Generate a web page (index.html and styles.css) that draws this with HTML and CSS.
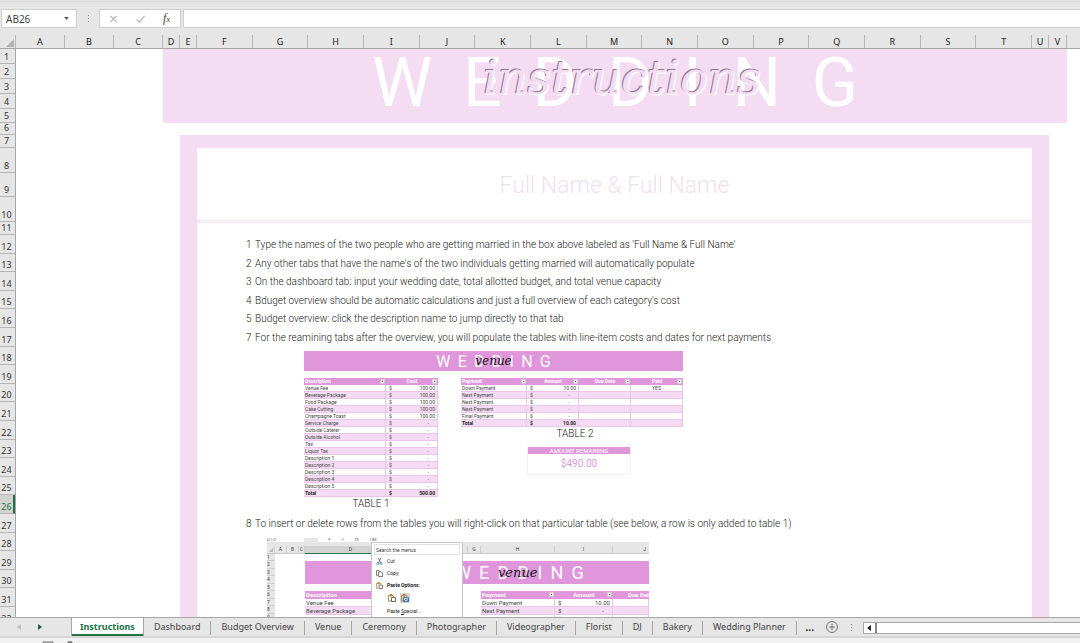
FILE: index.html
```html
<!DOCTYPE html>
<html lang="en">
<head>
    <meta charset="UTF-8">
    <meta name="viewport" content="width=device-width, initial-scale=1.0">
    <title>Wedding Planner - Instructions</title>
    <link rel="stylesheet" href="styles.css">
</head>
<body>

    <div class="formula-bar">
        <div class="name-box">
            <select class="name-select" aria-label="Name box">
                <option>AB26</option>
            </select>
            <svg class="caret" viewBox="0 0 6 4"><path d="M0 0h6L3 4z"/></svg>
        </div>
        <span class="dots"><i></i><i></i><i></i></span>
        <div class="formula-tools">
            <button class="tool" aria-label="Cancel">
                <svg viewBox="0 0 10 10"><path d="M1 1l8 8M9 1L1 9"/></svg>
            </button>
            <button class="tool" aria-label="Enter">
                <svg viewBox="0 0 10 10"><path d="M0 5.500L3.500 9L10 1"/></svg>
            </button>
            <button class="tool fx">f<sub>x</sub></button>
        </div>
        <input type="text" class="formula-input" aria-label="Formula bar">
    </div>

    <div class="columns">
        <span class="corner"><svg viewBox="0 0 8 8"><path d="M8 0v8H0z"/></svg></span>
        <span>A</span><span>B</span><span>C</span><span>D</span><span>E</span>
        <span>F</span><span>G</span><span>H</span><span>I</span><span>J</span>
        <span>K</span><span>L</span><span>M</span><span>N</span><span>O</span>
        <span>P</span><span>Q</span><span>R</span><span>S</span><span>T</span>
        <span>U</span><span>V</span>
    </div>

    <div class="sheet">
        <div class="rows">
            <span>1</span><span>2</span><span>3</span><span>4</span><span>5</span>
            <span>6</span><span>7</span><span>8</span><span>9</span><span>10</span>
            <span>11</span><span>12</span><span>13</span><span>14</span><span>15</span>
            <span>16</span><span>17</span><span>18</span><span>19</span><span>20</span>
            <span>21</span><span>22</span><span>23</span><span>24</span><span>25</span>
            <span class="current">26</span><span>27</span><span>28</span><span>29</span><span>30</span>
            <span>31</span><span>32</span>
        </div>

        <main class="cells">
            <header class="banner">
                <h1 class="banner-title">W &thinsp;E &thinsp;D &thinsp;D &thinsp;I &thinsp;N &thinsp;G</h1>
                <span class="banner-script">instructions</span>
            </header>

            <div class="frame">
                <div class="page">
                    <h2 class="names">Full Name &amp; Full Name</h2>

                    <ol class="steps">
                        <li value="1"><span class="num">1</span>Type the names of the two people who are getting married in the box above labeled as 'Full Name &amp; Full Name'</li>
                        <li value="2"><span class="num">2</span>Any other tabs that have the name's of the two individuals getting married will automatically populate</li>
                        <li value="3"><span class="num">3</span>On the dashboard tab: input your wedding date, total allotted budget, and total venue capacity</li>
                        <li value="4"><span class="num">4</span>Bduget overview should be automatic calculations and just a full overview of each category's cost</li>
                        <li value="5"><span class="num">5</span>Budget overview: click the description name to jump directly to that tab</li>
                        <li value="7"><span class="num">7</span>For the reamining tabs after the overview, you will populate the tables with line-item costs and dates for next payments</li>
                    </ol>

                    <section class="example">
                        <div class="venue-banner">
                            <span class="venue-title">W &thinsp;E &thinsp;D &thinsp;D &thinsp;I &thinsp;N &thinsp;G</span>
                            <span class="venue-script">venue</span>
                        </div>
                        <div class="tables">
                            <div class="table-one">
                                <table class="budget">
                                    <colgroup><col class="col-desc"><col></colgroup>
                                    <tr><th class="left">Description<button class="filter" aria-label="Filter description"></button></th><th>Cost<button class="filter" aria-label="Filter cost"></button></th></tr>
                                    <tr><td>Venue Fee</td><td class="money"><span>$</span>100.00</td></tr>
                                    <tr><td>Beverage Package</td><td class="money"><span>$</span>100.00</td></tr>
                                    <tr><td>Food Package</td><td class="money"><span>$</span>100.00</td></tr>
                                    <tr><td>Cake Cutting</td><td class="money"><span>$</span>100.00</td></tr>
                                    <tr><td>Champagne Toast</td><td class="money"><span>$</span>100.00</td></tr>
                                    <tr><td>Service Charge</td><td class="money none"><span>$</span>-</td></tr>
                                    <tr><td>Outside Caterer</td><td class="money none"><span>$</span>-</td></tr>
                                    <tr><td>Outside Alcohol</td><td class="money none"><span>$</span>-</td></tr>
                                    <tr><td>Tax</td><td class="money none"><span>$</span>-</td></tr>
                                    <tr><td>Liquor Tax</td><td class="money none"><span>$</span>-</td></tr>
                                    <tr><td>Description 1</td><td class="money none"><span>$</span>-</td></tr>
                                    <tr><td>Description 2</td><td class="money none"><span>$</span>-</td></tr>
                                    <tr><td>Description 3</td><td class="money none"><span>$</span>-</td></tr>
                                    <tr><td>Description 4</td><td class="money none"><span>$</span>-</td></tr>
                                    <tr><td>Description 5</td><td class="money none"><span>$</span>-</td></tr>
                                    <tr class="total"><td>Total</td><td class="money"><span>$</span>500.00</td></tr>
                                </table>
                                <p class="caption">TABLE 1</p>
                            </div>
                            <div class="table-two">
                                <table class="budget">
                                    <colgroup><col class="col-pay"><col><col><col></colgroup>
                                    <tr><th class="left">Payment<button class="filter" aria-label="Filter payment"></button></th><th>Amount<button class="filter" aria-label="Filter amount"></button></th><th>Due Date<button class="filter" aria-label="Filter due date"></button></th><th>Paid<button class="filter" aria-label="Filter paid"></button></th></tr>
                                    <tr><td>Down Payment</td><td class="money"><span>$</span>10.00</td><td></td><td class="mid">YES</td></tr>
                                    <tr><td>Next Payment</td><td class="money none"><span>$</span>-</td><td></td><td></td></tr>
                                    <tr><td>Next Payment</td><td class="money none"><span>$</span>-</td><td></td><td></td></tr>
                                    <tr><td>Next Payment</td><td class="money none"><span>$</span>-</td><td></td><td></td></tr>
                                    <tr><td>Final Payment</td><td class="money none"><span>$</span>-</td><td></td><td></td></tr>
                                    <tr class="total"><td>Total</td><td class="money"><span>$</span>10.00</td><td></td><td></td></tr>
                                </table>
                                <p class="caption">TABLE 2</p>
                                <div class="remaining">
                                    <div class="remaining-head">AMOUNT REMAINING</div>
                                    <div class="remaining-value">$490.00</div>
                                </div>
                            </div>
                        </div>
                    </section>

                    <ol class="steps steps-last">
                        <li value="8"><span class="num">8</span>To insert or delete rows from the tables you will right-click on that particular table (see below, a row is only added to table 1)</li>
                    </ol>

                    <section class="capture">
                        <div class="mini-bar"><span>D13</span><i></i><span>×</span><span>✓</span><span>fx</span><span>Tax</span></div>
                        <div class="mini-columns">
                            <span class="mini-corner"><svg viewBox="0 0 4 4"><path d="M4 0v4H0z"/></svg></span><span>A</span><span>B</span><span>C</span><span class="picked">D</span><span></span><span>G</span><span>H</span><span>I</span><span>J</span>
                        </div>
                        <div class="mini-sheet">
                            <div class="mini-rows">
                                <span>1</span><span>2</span><span>3</span><span>4</span><span>5</span><span>6</span><span>7</span><span>8</span><span>9</span>
                            </div>
                            <div class="mini-cells">
                                <div class="mini-banner">
                                    <span class="mini-title">W &thinsp;E &thinsp;D &thinsp;D &thinsp;I &thinsp;N &thinsp;G</span>
                                    <span class="venue-script">venue</span>
                                </div>
                                <div class="mini-tables">
                                    <table class="budget mini">
                                        <tr><th class="left">Description</th></tr>
                                        <tr><td>Venue Fee</td></tr>
                                        <tr><td>Beverage Package</td></tr>
                                        <tr><td>Food Package</td></tr>
                                    </table>
                                    <table class="budget mini mini-pay">
                                        <colgroup><col class="col-mini-pay"><col class="col-mini-amount"><col></colgroup>
                                        <tr><th class="left">Payment<button class="filter" aria-label="Filter payment"></button></th><th>Amount<button class="filter" aria-label="Filter amount"></button></th><th class="cut">Due Date</th></tr>
                                        <tr><td>Down Payment</td><td class="money"><span>$</span>10.00</td><td></td></tr>
                                        <tr><td>Next Payment</td><td class="money none"><span>$</span>-</td><td></td></tr>
                                        <tr><td>Next Payment</td><td class="money none"><span>$</span>-</td><td></td></tr>
                                    </table>
                                </div>
                            </div>
                        </div>

                        <div class="menu">
                            <input type="text" class="menu-search" placeholder="Search the menus" aria-label="Search the menus">
                            <button class="menu-item">
                                <svg viewBox="0 0 8 8"><path class="grey" d="M2.500 0l2.500 5M5.500 0L3 5"/><circle class="blue" cx="2.200" cy="6.200" r="1.200"/><circle class="blue" cx="5.800" cy="6.200" r="1.200"/></svg>
                                Cut
                            </button>
                            <button class="menu-item">
                                <svg viewBox="0 0 8 8"><path class="grey" d="M3 6H.5V.5h3L5 2M3 2h3l1.500 1.500v4H3z"/></svg>
                                Copy
                            </button>
                            <button class="menu-item strong">
                                <svg viewBox="0 0 8 8"><path class="gold" d="M3 7H.5V1.500h5V3M2 .5h2v1.500H2z"/><path class="grey" d="M3.500 3.500h4v4h-4z"/></svg>
                                Paste Options:
                            </button>
                            <div class="paste-icons">
                                <button aria-label="Paste"><svg viewBox="0 0 8 8"><path class="gold" d="M3 7H.5V1.500h5V3M2 .5h2v1.500H2z"/><path class="grey" d="M3.500 3.500h4v4h-4z"/></svg></button>
                                <button class="picked" aria-label="Paste as picture"><svg viewBox="0 0 8 8"><path class="gold" d="M3 7H.5V1.500h5V3M2 .5h2v1.500H2z"/><path class="blue" d="M2.500 3.500h5v4h-5zM3 7l2-2 2.500 2"/></svg></button>
                            </div>
                            <button class="menu-item last"><span>Paste <u>S</u>pecial...</span></button>
                        </div>
                    </section>
                </div>
            </div>
        </main>
    </div>

    <nav class="tab-bar">
        <div class="tab-arrows">
            <button class="arrow off" aria-label="Previous sheet"><svg viewBox="0 0 4 6"><path d="M4 0v6L0 3z"/></svg></button>
            <button class="arrow" aria-label="Next sheet"><svg viewBox="0 0 4 6"><path d="M0 0v6l4-3z"/></svg></button>
        </div>
        <a href="#" class="tab active">Instructions</a>
        <a href="#" class="tab">Dashboard</a>
        <a href="#" class="tab">Budget Overview</a>
        <a href="#" class="tab">Venue</a>
        <a href="#" class="tab">Ceremony</a>
        <a href="#" class="tab">Photographer</a>
        <a href="#" class="tab">Videographer</a>
        <a href="#" class="tab">Florist</a>
        <a href="#" class="tab">DJ</a>
        <a href="#" class="tab">Bakery</a>
        <a href="#" class="tab">Wedding Planner</a>
        <button class="more">...</button>
        <button class="add" aria-label="New sheet"><svg viewBox="0 0 12 12"><circle cx="6" cy="6" r="5.500"/><path d="M6 3v6M3 6h6"/></svg></button>
        <span class="dots"><i></i><i></i><i></i></span>
        <div class="scrollbar">
            <button class="scroll-left" aria-label="Scroll left"><svg viewBox="0 0 4 6"><path d="M4 0v6L0 3z"/></svg></button>
            <div class="thumb"></div>
        </div>
    </nav>

    <footer class="status">
        <svg viewBox="0 0 40 4"><path d="M1 4V1h10v3M24 4c1-4 7-4 8 0M26 1h4"/></svg>
    </footer>

</body>
</html>
```

FILE: styles.css
```css
* {
    box-sizing: border-box;
}

body {
    margin: 0;
    height: 100vh;
    display: flex;
    flex-direction: column;
    overflow: hidden;
    background: #e6e6e6;
    color: #444;
    font-family: "Noto Sans", "Open Sans", sans-serif;
    font-size: 10px;
}

button,
input,
select {
    margin: 0;
    padding: 0;
    border: none;
    background: none;
    color: inherit;
    font: inherit;
}

p,
h1,
h2,
ol {
    margin: 0;
    padding: 0;
    font-weight: normal;
}

svg {
    display: block;
    fill: none;
}

/* formula bar */
.formula-bar {
    display: flex;
    flex: none;
    height: 28px;
    padding: 9px 0 0 1px;
    background: linear-gradient(#e6e6e6 1px, #d6d6d6 1px, #d6d6d6 2px, #e6e6e6 2px);
}

.name-box {
    position: relative;
    width: 76px;
    background: #fff;
    border: 1px solid #cfcfcf;
}

.name-select {
    display: block;
    width: 100%;
    height: 100%;
    padding-left: 4px;
    appearance: none;
}

.caret {
    position: absolute;
    right: 7px;
    top: 7px;
    width: 5px;
    height: 3px;
    fill: #555;
}

.dots {
    display: flex;
    flex-direction: column;
    justify-content: center;
    align-items: center;
    gap: 2px;
    width: 22px;
}

.dots i {
    width: 1px;
    height: 1px;
    background: #888;
}

.formula-tools {
    display: flex;
    width: 82px;
    margin-right: 2px;
    background: #fff;
    border: 1px solid #cfcfcf;
}

.tool {
    flex: 1;
    display: flex;
    align-items: center;
    justify-content: center;
}

.tool svg {
    width: 9px;
    height: 8px;
    stroke: #b5b5b5;
    stroke-width: 1.5;
}

.tool.fx {
    font-family: "Liberation Serif", serif;
    font-size: 12px;
    font-style: italic;
}

.tool sub {
    font-size: 9px;
}

.formula-input {
    flex: 1;
    background: #fff;
    border: 1px solid #cfcfcf;
    border-right: none;
}

/* column and row headings */
.columns {
    display: grid;
    flex: none;
    grid-template-columns: 16px repeat(3, 49px) 17px 17px repeat(15, minmax(0, 1fr)) 17px 18px;
    height: 21px;
    padding: 7px 13px 0 0;
    border-bottom: 1px solid #a6a6a6;
}

.columns span {
    border-right: 1px solid #b5b5b5;
    color: #222;
    font-size: 9px;
    line-height: 13px;
    text-align: center;
}

.columns .corner {
    padding: 4px 0 0 6px;
}

.corner svg {
    width: 8px;
    height: 8px;
    fill: #b2b2b2;
}

.sheet {
    display: flex;
    flex: 1;
    min-height: 0;
    overflow: hidden;
    background: #fff;
}

.rows {
    display: grid;
    flex: none;
    width: 16px;
    align-content: start;
    grid-template-rows: repeat(4, 15px) 14px 12px 13px 25px 24px 25px 13px repeat(4, 19px 18px 19px 18px 19px) 19px;
    background: #e6e6e6;
    border-right: 1px solid #a6a6a6;
}

.rows span {
    display: flex;
    align-items: flex-end;
    justify-content: center;
    padding-right: 2px;
    border-bottom: 1px solid #b5b5b5;
    color: #333;
    font-size: 9px;
    line-height: 12px;
}

.rows .current {
    background: #d2d2d2;
    border-right: 2px solid #217346;
    padding-right: 0;
    color: #217346;
}

/* sheet content */
.cells {
    flex: 1;
    min-width: 0;
    padding: 0 13px 0 147px;
    font-family: Roboto, sans-serif;
}

.banner {
    position: relative;
    height: 74px;
    background: #f4ddf3;
    text-align: center;
}

.banner-title {
    color: #fff;
    font-size: 68px;
    line-height: 68px;
    white-space: nowrap;
}

.banner-script {
    position: absolute;
    inset: 0;
    padding-left: 14px;
    color: #f4ddf3;
    font-family: "DejaVu Serif", serif;
    font-size: 46px;
    font-style: italic;
    line-height: 58px;
    text-shadow: -1px -1px 0 #8f7c92, 1px 1px 0 #fff;
}

.frame {
    margin: 12px 18px 0 17px;
    padding: 13px 17px 0;
    background: #f4ddf3;
}

.page {
    background: #fff;
}

.names {
    height: 75px;
    border-bottom: 3px double #f3e4f3;
    color: #f2dff1;
    font-size: 23px;
    font-weight: 300;
    line-height: 75px;
    text-align: center;
}

.steps {
    display: grid;
    grid-template-rows: 19px 18px 19px 18px 19px 19px;
    padding: 12px 0 0 49px;
    list-style: none;
}

.steps li {
    display: flex;
    align-items: center;
    gap: 3px;
    color: #222;
    font-size: 10px;
    font-weight: 300;
    white-space: nowrap;
}

.steps .num {
    width: 6px;
}

.steps-last {
    grid-template-rows: 19px;
    padding-top: 0;
}

.example {
    width: 379px;
    height: 167px;
    margin-left: 107px;
    padding-top: 4px;
}

.venue-banner,
.mini-banner {
    position: relative;
    height: 20px;
    background: #e096da;
    text-align: center;
}

.venue-title,
.mini-title {
    display: block;
    color: #fff;
    font-size: 16px;
    line-height: 21px;
    white-space: nowrap;
}

.venue-script {
    position: absolute;
    inset: 0;
    color: #111;
    font-family: "DejaVu Serif", serif;
    font-size: 12px;
    font-style: italic;
    line-height: 20px;
}

.tables {
    display: flex;
    gap: 23px;
    margin-top: 7px;
}

.table-one {
    width: 134px;
}

.table-two {
    flex: 1;
}

.budget {
    width: 100%;
    table-layout: fixed;
    border-spacing: 0;
    font-size: 5px;
    line-height: 6px;
}

.col-desc {
    width: 82px;
}

.col-pay {
    width: 66px;
}

.budget th {
    position: relative;
    padding: 0 0 1px;
    background: #e096da;
    color: #fff;
    font-weight: bold;
}

.budget .left {
    padding-left: 1px;
    text-align: left;
}

.filter {
    position: absolute;
    right: 1px;
    top: 1px;
    width: 5px;
    height: 5px;
    background: #fff;
    border: 1px solid #d8c4d8;
}

.filter::after {
    content: "";
    display: block;
    width: 1px;
    height: 1px;
    margin: 1px;
    background: #555;
}

.budget td {
    height: 7px;
    padding: 0 1px;
    border-right: 1px solid #ecc4ea;
    border-bottom: 1px solid #ecc4ea;
    white-space: nowrap;
}

.budget tr:nth-child(odd) td {
    background: #f4ddf3;
}

.budget .money {
    padding: 0 2px 0 3px;
    text-align: right;
}

.budget .none {
    padding-right: 8px;
}

.money span {
    float: left;
}

.budget .mid {
    text-align: center;
}

.budget .total {
    color: #222;
    font-weight: bold;
}

.caption {
    color: #222;
    font-size: 10px;
    font-weight: 300;
    line-height: 14px;
    text-align: center;
}

.table-two .caption {
    padding-left: 6px;
}

.remaining {
    width: 104px;
    margin: 6px 0 0 66px;
    border: 1px solid #f8eef8;
    border-top: none;
    text-align: center;
}

.remaining-head {
    background: #e096da;
    color: #fff;
    font-size: 6px;
    line-height: 7px;
}

.remaining-value {
    color: #dc9bdc;
    font-size: 10px;
    line-height: 20px;
}

/* captured sheet with the right-click menu */
.capture {
    position: relative;
    width: 382px;
    height: 84px;
    margin: 5px 0 0 70px;
    overflow: hidden;
    font-size: 5px;
}

.mini-bar {
    display: flex;
    align-items: flex-end;
    gap: 10px;
    height: 4px;
    overflow: hidden;
    color: #777;
    line-height: 5px;
}

.mini-bar i {
    width: 14px;
    height: 4px;
    margin-left: 18px;
    background: #e6e6e6;
}

.mini-columns {
    display: grid;
    grid-template-columns: 8px 12px 12px 6px 92px 71px 13px 74px 58px 1fr;
    height: 12px;
    padding-top: 4px;
    background: #e6e6e6;
    border-bottom: 1px solid #c8c8c8;
    line-height: 7px;
    text-align: center;
}

.mini-columns span {
    border-right: 1px solid #cfcfcf;
}

.mini-corner svg {
    width: 4px;
    height: 4px;
    margin: 2px 0 0 2px;
    fill: #b2b2b2;
}

.mini-columns .picked {
    background: #d2d2d2;
    border-bottom: 1px solid #217346;
}

.mini-columns span:last-child {
    padding-right: 3px;
    text-align: right;
    border: none;
}

.mini-sheet {
    display: flex;
}

.mini-rows {
    display: grid;
    grid-template-rows: repeat(5, 7px 8px);
    width: 8px;
    background: #e6e6e6;
    line-height: 7px;
}

.mini-rows span {
    border-bottom: 1px solid #cfcfcf;
}

.mini-cells {
    flex: 1;
    padding: 7px 0 0 30px;
}

.mini-banner {
    height: 23px;
    padding-left: 150px;
    text-align: left;
}

.mini-title {
    font-size: 18px;
    line-height: 24px;
}

.mini-banner .venue-script {
    padding-left: 193px;
    font-size: 13px;
    line-height: 23px;
}

.mini-tables {
    display: grid;
    grid-template-columns: 92px 168px;
    justify-content: space-between;
    margin-top: 7px;
}

.mini {
    font-size: 6px;
    line-height: 7px;
}

.col-mini-pay {
    width: 74px;
}

.col-mini-amount {
    width: 58px;
}

.mini .cut {
    padding-left: 15px;
    overflow: hidden;
    text-align: left;
    white-space: nowrap;
}

.menu {
    position: absolute;
    left: 104px;
    top: 4px;
    width: 92px;
    height: 84px;
    padding: 1px 2px;
    background: #fff;
    border: 1px solid #c6c6c6;
    color: #222;
}

.menu-search {
    display: block;
    width: 100%;
    height: 11px;
    padding-left: 1px;
    border: 1px solid #e2e2e2;
    font-size: 5px;
}

.menu-search::placeholder {
    color: #444;
}

.menu-item {
    display: flex;
    align-items: center;
    gap: 4px;
    height: 12px;
    padding-left: 2px;
    font-size: 5px;
}

.menu-item svg {
    width: 7px;
    height: 7px;
}

.menu-item.strong {
    font-weight: bold;
}

.menu-item.last {
    padding-left: 13px;
}

.grey {
    stroke: #666;
}

.blue {
    stroke: #3f7fb5;
}

.gold {
    stroke: #b98a3e;
}

.paste-icons {
    display: flex;
    gap: 3px;
    padding: 2px 0 2px 13px;
}

.paste-icons button {
    padding: 1px;
}

.paste-icons svg {
    width: 8px;
    height: 8px;
}

.paste-icons .picked {
    background: #d5d5d5;
}

/* sheet tabs */
.tab-bar {
    display: flex;
    flex: none;
    height: 19px;
    border-top: 1px solid #a6a6a6;
}

.tab-arrows {
    display: flex;
    align-items: center;
    gap: 17px;
    width: 71px;
    padding-left: 17px;
}

.arrow svg,
.scroll-left svg {
    width: 4px;
    height: 6px;
    fill: #1a5c38;
}

.arrow.off svg {
    fill: #c0c0c0;
}

.tab {
    position: relative;
    padding: 0 11px 0 10px;
    color: #444;
    font-size: 9px;
    line-height: 18px;
    text-decoration: none;
    white-space: nowrap;
}

.tab:not(.active)::after {
    content: "";
    position: absolute;
    right: 0;
    top: 3px;
    width: 1px;
    height: 14px;
    background: #a6a6a6;
}

.tab.active {
    padding: 0 8px;
    background: #fff;
    border: 1px solid #a6a6a6;
    border-width: 0 1px;
    box-shadow: inset 0 -2px #217346;
    color: #217346;
    font-weight: bold;
}

.more {
    width: 26px;
    color: #222;
    font-weight: bold;
}

.add {
    padding: 0 3px;
}

.add svg {
    width: 12px;
    height: 12px;
    stroke: #777;
}

.scrollbar {
    display: flex;
    flex: 1;
    height: 12px;
    margin-top: 4px;
    background: #fff;
    border: 1px solid #a6a6a6;
    border-right: none;
}

.scroll-left {
    width: 11px;
    padding-left: 3px;
}

.scroll-left svg {
    fill: #222;
}

.thumb {
    flex: 1;
    border-left: 2px solid #888;
}

.status {
    flex: none;
    height: 7px;
    padding: 3px 0 0 42px;
    background: #f1f1f1;
    border-top: 2px solid #d6d6d6;
}

.status svg {
    width: 40px;
    height: 4px;
    stroke: #666;
}
```
